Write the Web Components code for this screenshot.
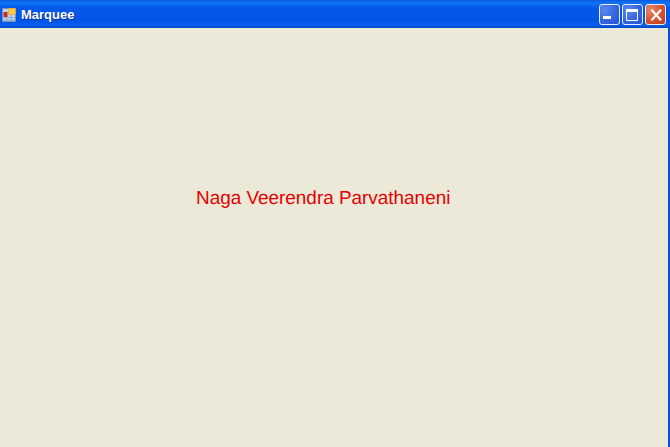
<!DOCTYPE html>
<html><head><meta charset="utf-8"><style>
html,body{margin:0;padding:0;height:100%;overflow:hidden;background:#ece9d8}
</style></head><body>
<xp-window title="Marquee"><marquee-label>Naga Veerendra Parvathaneni</marquee-label></xp-window>
<script>
class XpCaptionButton extends HTMLElement{
  constructor(){super();const k=this.getAttribute('kind');
    const g={min:'<rect x="3" y="11" width="8" height="3" fill="#fff"/>',
      max:'<path d="M3.5 4.5h11v11h-11z" fill="none" stroke="#fff" stroke-width="1"/><rect x="3" y="4" width="12" height="3" fill="#fff"/>',
      close:'<path d="M5.5 4.8l9.5 10.4M15 4.8l-9.5 10.4" stroke="#fff" stroke-width="2.2" fill="none"/>'}[k];
    this.attachShadow({mode:'open'}).innerHTML=`<style>
    :host{display:block;width:21px;height:21px;box-sizing:border-box;border:1px solid #e8eefc;border-radius:3px;
      background:${k==='close'?'radial-gradient(circle at 25% 25%,#e8896a,#d6532e 55%,#bc3c1a)':'radial-gradient(circle at 25% 25%,#5f88ec,#3566e2 55%,#2650cf)'};}
    svg{display:block;width:19px;height:19px}
    </style><svg viewBox="0 0 19 19">${g}</svg>`;
  }
}
customElements.define('xp-caption-button',XpCaptionButton);
class XpTitleBar extends HTMLElement{
  constructor(){super();this.attachShadow({mode:'open'}).innerHTML=`<style>
    :host{display:flex;height:28px;flex:none;box-sizing:border-box;padding:4px 2px 0 2px;
      background:linear-gradient(#0a5be0 0,#0f74f5 3px,#0558ea 8px,#0054e6 21px,#0a5fee 25px,#0348c4 28px);}
    svg{flex:none;display:block;width:14px;height:14px;margin:4px 5px 0 0}
    .t{flex:1;padding-top:4px;font:bold 13px/14px "Liberation Sans",sans-serif;color:#fff;text-shadow:1px 1px 0 #0a2f96}
    .b{display:flex;gap:2px;margin-right:2px;height:21px}
    </style>
    <svg viewBox="0 0 14 14"><rect x=".5" y=".5" width="13" height="13" fill="#c4d4ea" stroke="#6f8fbe"/><path d="M1 9.5h12M1 12h12M9 7v6M5 10v3" stroke="#7f9cc8" stroke-width=".7"/><rect x="6.5" y=".5" width="7" height="6" fill="#f6cc52" stroke="#e0a830" stroke-width=".8"/><rect x="1.5" y="4" width="4" height="5" fill="#c8282c"/></svg>
    <span class="t"><slot></slot></span>
    <span class="b"><xp-caption-button kind="min"></xp-caption-button><xp-caption-button kind="max"></xp-caption-button><xp-caption-button kind="close"></xp-caption-button></span>`;
  }
}
customElements.define('xp-title-bar',XpTitleBar);
class XpWindow extends HTMLElement{
  constructor(){super();this.attachShadow({mode:'open'}).innerHTML=`<style>
    :host{display:flex;flex-direction:column;width:670px;height:447px;box-sizing:border-box;background:#ece9d8}
    .c{flex:1;display:flex;min-height:0;border-right:2px solid #0a4fd8;background:#ece9d8}
    </style><xp-title-bar>${this.getAttribute('title')}</xp-title-bar><div class="c"><slot></slot></div>`;
  }
}
customElements.define('xp-window',XpWindow);
class MarqueeLabel extends HTMLElement{
  constructor(){super();this.attachShadow({mode:'open'}).innerHTML=`<style>
    :host{display:block;flex:1;box-sizing:border-box;padding:159px 0 0 196px;font:18.92px/24px "Liberation Sans",Arial,sans-serif;color:#e60000;white-space:nowrap;text-rendering:geometricPrecision}
    </style><slot></slot>`;
  }
}
customElements.define('marquee-label',MarqueeLabel);
</script>
</body></html>
